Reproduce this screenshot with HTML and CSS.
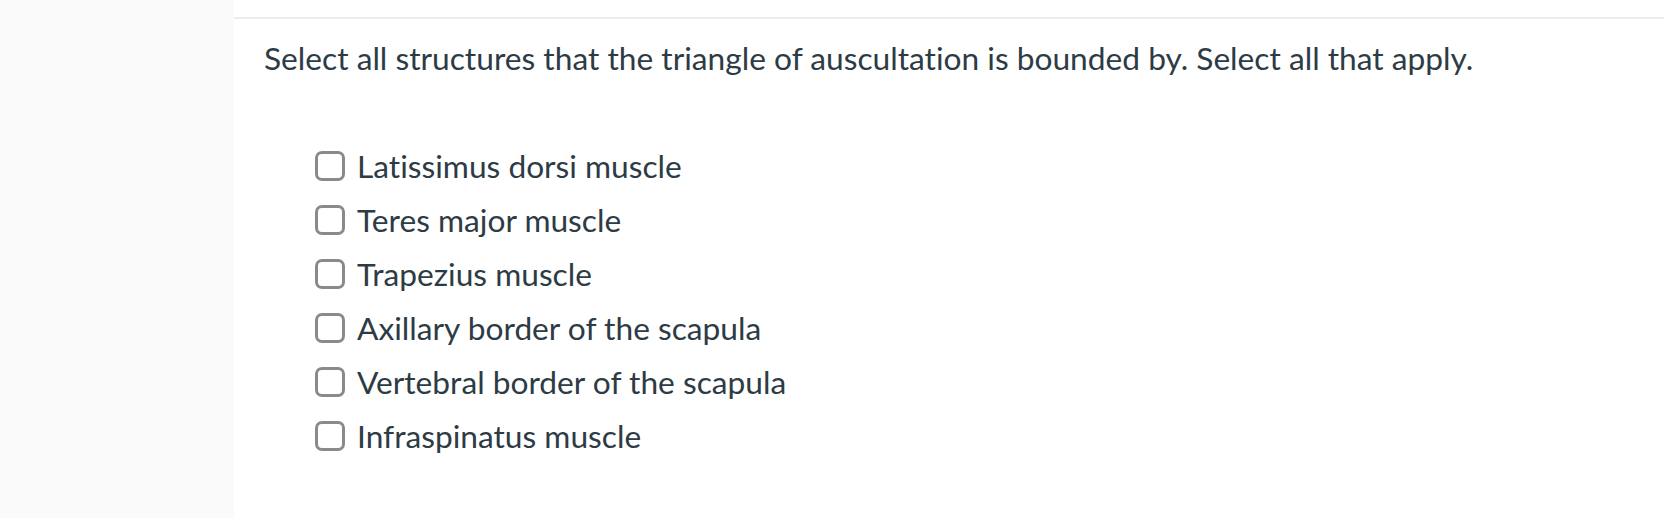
FILE: index.html
```html
<!DOCTYPE html>
<html>
<head>
<meta charset="utf-8">
<link rel="stylesheet" href="styles.css">
</head>
<body>
<div class="page">
  <aside class="sidebar"></aside>
  <main class="main">
    <div class="content">
      <p class="question">Select all structures that the triangle of auscultation is bounded by. Select all that apply.</p>
      <ul class="options">
        <li class="option"><span class="box"></span><span class="label">Latissimus dorsi muscle</span></li>
        <li class="option"><span class="box"></span><span class="label">Teres major muscle</span></li>
        <li class="option"><span class="box"></span><span class="label">Trapezius muscle</span></li>
        <li class="option"><span class="box"></span><span class="label">Axillary border of the scapula</span></li>
        <li class="option"><span class="box"></span><span class="label">Vertebral border of the scapula</span></li>
        <li class="option"><span class="box"></span><span class="label">Infraspinatus muscle</span></li>
      </ul>
    </div>
  </main>
</div>
</body>
</html>
```
FILE: styles.css
```css
html, body {
  margin: 0;
  padding: 0;
  background: #ffffff;
}
body {
  font-family: Lato, "Open Sans", sans-serif;
  color: #2d3b45;
  font-variant-ligatures: none;
}
.page {
  display: flex;
  height: 518px;
}
.sidebar {
  width: 234px;
  flex: 0 0 234px;
  background: #fafafa;
}
.main {
  flex: 1;
  padding-top: 17px;
}
.content {
  border-top: 2px solid #ececec;
  padding: 20px 0 0 30px;
}
.question {
  margin: 0;
  font-size: 31.7px;
  line-height: 38px;
}
.options {
  list-style: none;
  margin: 62px 0 0 0;
  padding: 0 0 0 51px;
}
.option {
  display: flex;
  align-items: center;
  height: 54px;
  font-size: 31.7px;
}
.box {
  box-sizing: border-box;
  width: 30px;
  height: 30px;
  border: 3px solid #8a8a8a;
  border-radius: 7px;
  margin-right: 12px;
  flex: 0 0 30px;
}
```
